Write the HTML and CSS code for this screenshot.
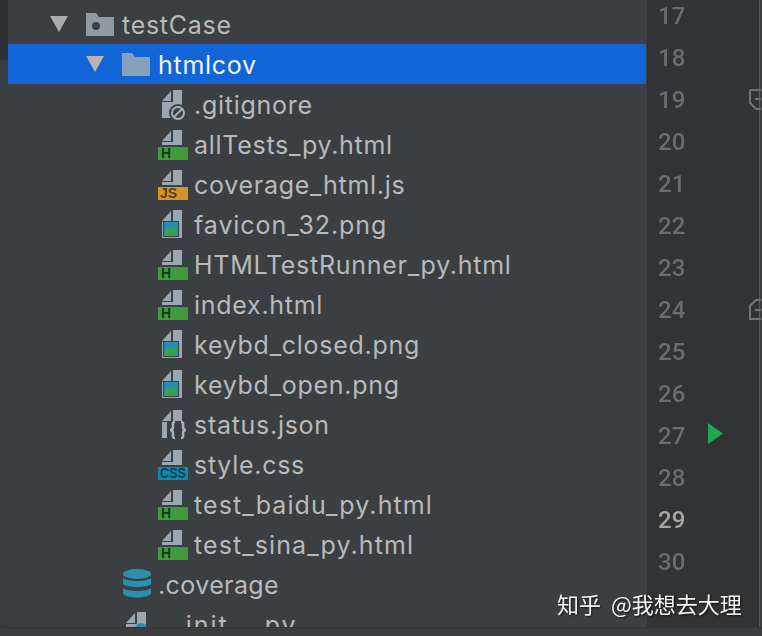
FILE: index.html
```html
<!DOCTYPE html>
<html lang="en">
<head>
<meta charset="utf-8">
<title>Project tree</title>
<link rel="stylesheet" href="styles.css">
</head>
<body>
<svg class="defs" width="0" height="0" aria-hidden="true">
  <defs>
    <g id="doc-short"><path d="M15 6h9v15H4v-3h11z"/><path d="M13 7v10H4z"/></g>
    <g id="doc-full"><path d="M15 6h9v28H4V18h11z"/><path d="M13 7v10H4z"/></g>
    <g id="picture"><rect x="5" y="17" width="16" height="16" fill="#3c3f41"/><rect x="6" y="18" width="14" height="14" fill="#1f8fb5"/><path d="M6 28l5-5 4 2 5-3v3l-3 7H6z" fill="#3a9f55"/></g>
  </defs>
</svg>
<div class="app">
  <div class="main">
    <div class="strip"><div class="strip-top"></div></div>
    <div class="tree">
      <div class="row lvl1">
        <span class="arrow"></span>
        <svg class="folder" width="28" height="24" viewBox="0 0 28 24"><path fill="#8f9aa2" d="M0 1h10l3 4h15v19H0z"/><circle cx="10" cy="14" r="4" fill="#3c3f41"/></svg>
        <span class="label">testCase</span>
      </div>
      <div class="row lvl2 selected">
        <span class="arrow"></span>
        <svg class="folder" width="28" height="24" viewBox="0 0 28 24"><path fill="#87a0bd" d="M0 1h10l3 4h15v19H0z"/></svg>
        <span class="label">htmlcov</span>
      </div>
      <div class="row file">
        <svg class="ficon" width="32" height="40" viewBox="0 0 32 40"><use href="#doc-full" fill="#9aa7b0"/><circle cx="20" cy="29" r="9" fill="#3c3f41"/><circle cx="20" cy="29" r="6" fill="none" stroke="#a3aeb6" stroke-width="2"/><path d="M16 33l8-8" stroke="#a3aeb6" stroke-width="2"/></svg>
        <span class="label">.gitignore</span>
      </div>
      <div class="row file">
        <svg class="ficon" width="32" height="40" viewBox="0 0 32 40"><use href="#doc-short" fill="#9aa7b0"/><rect x="0" y="23" width="30" height="13" fill="#3f9b3c"/><text class="badge" x="3" y="34" fill="#123d12">H</text></svg>
        <span class="label">allTests_py.html</span>
      </div>
      <div class="row file">
        <svg class="ficon" width="32" height="40" viewBox="0 0 32 40"><use href="#doc-short" fill="#9aa7b0"/><rect x="0" y="23" width="30" height="13" fill="#d0962b"/><text class="badge" x="2" y="34" fill="#5a3d08">JS</text></svg>
        <span class="label">coverage_html.js</span>
      </div>
      <div class="row file">
        <svg class="ficon" width="32" height="40" viewBox="0 0 32 40"><use href="#doc-full" fill="#9aa7b0"/><use href="#picture"/></svg>
        <span class="label roomy">favicon_32.png</span>
      </div>
      <div class="row file">
        <svg class="ficon" width="32" height="40" viewBox="0 0 32 40"><use href="#doc-short" fill="#9aa7b0"/><rect x="0" y="23" width="30" height="13" fill="#3f9b3c"/><text class="badge" x="3" y="34" fill="#123d12">H</text></svg>
        <span class="label">HTMLTestRunner_py.html</span>
      </div>
      <div class="row file">
        <svg class="ficon" width="32" height="40" viewBox="0 0 32 40"><use href="#doc-short" fill="#9aa7b0"/><rect x="0" y="23" width="30" height="13" fill="#3f9b3c"/><text class="badge" x="3" y="34" fill="#123d12">H</text></svg>
        <span class="label">index.html</span>
      </div>
      <div class="row file">
        <svg class="ficon" width="32" height="40" viewBox="0 0 32 40"><use href="#doc-full" fill="#9aa7b0"/><use href="#picture"/></svg>
        <span class="label">keybd_closed.png</span>
      </div>
      <div class="row file">
        <svg class="ficon" width="32" height="40" viewBox="0 0 32 40"><use href="#doc-full" fill="#9aa7b0"/><use href="#picture"/></svg>
        <span class="label">keybd_open.png</span>
      </div>
      <div class="row file">
        <svg class="ficon" width="32" height="40" viewBox="0 0 32 40"><use href="#doc-full" fill="#9aa7b0"/><rect x="9" y="17" width="22" height="19" fill="#3c3f41"/><path d="M17 18c-3 0-2 3-2 5s-1 3-3 3c2 0 3 1 3 3s-1 5 2 5M23 18c3 0 2 3 2 5s1 3 3 3c-2 0-3 1-3 3s1 5-2 5" fill="none" stroke="#a9b3ba" stroke-width="2.500"/></svg>
        <span class="label">status.json</span>
      </div>
      <div class="row file">
        <svg class="ficon" width="32" height="40" viewBox="0 0 32 40"><use href="#doc-short" fill="#9aa7b0"/><rect x="0" y="23" width="30" height="13" fill="#0f88ad"/><text class="badge" x="2" y="34" fill="#07404f" textLength="26" lengthAdjust="spacingAndGlyphs">CSS</text></svg>
        <span class="label">style.css</span>
      </div>
      <div class="row file">
        <svg class="ficon" width="32" height="40" viewBox="0 0 32 40"><use href="#doc-short" fill="#9aa7b0"/><rect x="0" y="23" width="30" height="13" fill="#3f9b3c"/><text class="badge" x="3" y="34" fill="#123d12">H</text></svg>
        <span class="label loose">test_baidu_py.html</span>
      </div>
      <div class="row file">
        <svg class="ficon" width="32" height="40" viewBox="0 0 32 40"><use href="#doc-short" fill="#9aa7b0"/><rect x="0" y="23" width="30" height="13" fill="#3f9b3c"/><text class="badge" x="3" y="34" fill="#123d12">H</text></svg>
        <span class="label loose">test_sina_py.html</span>
      </div>
      <div class="row lvl2-item">
        <svg class="ficon-db" width="30" height="30" viewBox="0 0 30 30"><g fill="#2b8fb0"><ellipse cx="15" cy="5" rx="14" ry="5"/><path d="M1 9c3 4 25 4 28 0v6c-3 4-25 4-28 0z"/><path d="M1 19c3 4 25 4 28 0v5c-1 6-27 6-28 0z"/></g></svg>
        <span class="label tight">.coverage</span>
      </div>
      <div class="row lvl2-item">
        <svg class="ficon-db" width="30" height="40" viewBox="0 0 30 40"><path fill="#9aa7b0" d="M15 8h9v28H4V20h11z"/><path fill="#9aa7b0" d="M13 9v10H4z"/><circle cx="19" cy="25" r="6" fill="#2b8fb0"/></svg>
        <span class="label wide">__init__.py</span>
      </div>
    </div>
    <div class="gutter">
      <div class="line">17</div>
      <div class="line">18</div>
      <div class="line">19<svg class="fold" width="12" height="22" viewBox="0 0 12 22"><path d="M1 1h11M1 1v13l6 6h5M6 10h6" fill="none" stroke="#727272" stroke-width="2"/></svg></div>
      <div class="line">20</div>
      <div class="line">21</div>
      <div class="line">22</div>
      <div class="line">23</div>
      <div class="line">24<svg class="fold up" width="12" height="22" viewBox="0 0 12 22"><path d="M12 1H7L1 7v13h11M6 11h6" fill="none" stroke="#727272" stroke-width="2"/></svg></div>
      <div class="line">25</div>
      <div class="line">26</div>
      <div class="line">27<svg class="run" width="15" height="21" viewBox="0 0 15 21"><path d="M0 0l15 10.500L0 21z" fill="#1fa84f"/></svg></div>
      <div class="line">28</div>
      <div class="line current">29</div>
      <div class="line">30</div>
    </div>
  </div>
  <div class="statusbar"></div>
</div>
<div class="watermark">知乎 @我想去大理</div>
</body>
</html>
```
FILE: styles.css
```css
html, body {
  margin: 0;
  padding: 0;
  background: #3c3f41;
}
body {
  width: 762px;
  height: 636px;
  overflow: hidden;
  position: relative;
  font-family: Inter, "Noto Sans", sans-serif;
}
.defs {
  position: absolute;
}
.app {
  display: flex;
  flex-direction: column;
  height: 636px;
  filter: blur(0.4px);
}
.main {
  display: flex;
  height: 627px;
  overflow: hidden;
}
.strip {
  width: 8px;
  flex: none;
  background: #393c3e;
}
.strip-top {
  height: 60px;
  background: #2f3133;
}
.tree {
  width: 638px;
  flex: none;
  padding-top: 4px;
  background: #3c3f41;
}
.row {
  display: flex;
  align-items: center;
  height: 40px;
  box-sizing: border-box;
  color: #b8babc;
  font-size: 25px;
  letter-spacing: 0.72px;
  white-space: nowrap;
}
.label {
  position: relative;
  top: 1px;
}
.roomy {
  letter-spacing: 0.93px;
}
.loose {
  letter-spacing: 1.1px;
}
.tight {
  letter-spacing: 0.4px;
}
.wide {
  letter-spacing: 2px;
}
.arrow {
  width: 0;
  height: 0;
  flex: none;
  border-left: 9px solid transparent;
  border-right: 9px solid transparent;
  border-top: 16px solid #a9abad;
}
.folder {
  flex: none;
  margin-left: 18px;
  margin-right: 8px;
}
.lvl1 {
  padding-left: 42px;
}
.lvl2 {
  padding-left: 78px;
}
.selected {
  background: #1165d6;
  color: #f2f6fb;
}
.selected .arrow {
  border-top-color: #b8b5b0;
}
.file {
  padding-left: 150px;
}
.ficon {
  flex: none;
  margin-right: 4px;
}
.lvl2-item {
  padding-left: 114px;
}
.ficon-db {
  flex: none;
  margin-right: 6px;
}
.badge {
  font-family: "Liberation Sans", sans-serif;
  font-size: 14px;
  font-weight: 700;
  letter-spacing: 0;
}
.gutter {
  flex: 1;
  margin-left: 1px;
  margin-top: -5px;
  padding-bottom: 6px;
  background: #323335;
  border-right: 1px solid #5a5a5a;
  margin-right: 2px;
  color: #6b6c6d;
  font-family: Roboto, sans-serif;
  font-size: 24px;
  font-weight: 500;
}
.line {
  position: relative;
  height: 42px;
  line-height: 42px;
  padding-left: 11px;
}
.current {
  color: #a6a6a6;
}
.fold {
  position: absolute;
  right: -2px;
  top: 10px;
}
.run {
  position: absolute;
  left: 61px;
  top: 8px;
}
.statusbar {
  height: 9px;
  background: #3a3c3e;
  border-top: 1px solid #333537;
  box-sizing: border-box;
}
.watermark {
  position: absolute;
  left: 557px;
  top: 588px;
  color: #f4f4f4;
  font-family: "Noto Sans CJK SC", sans-serif;
  font-size: 22px;
  line-height: 30px;
  word-spacing: 5px;
  white-space: nowrap;
  text-shadow: 1px 1px 2px rgba(0, 0, 0, 0.7);
}
```
